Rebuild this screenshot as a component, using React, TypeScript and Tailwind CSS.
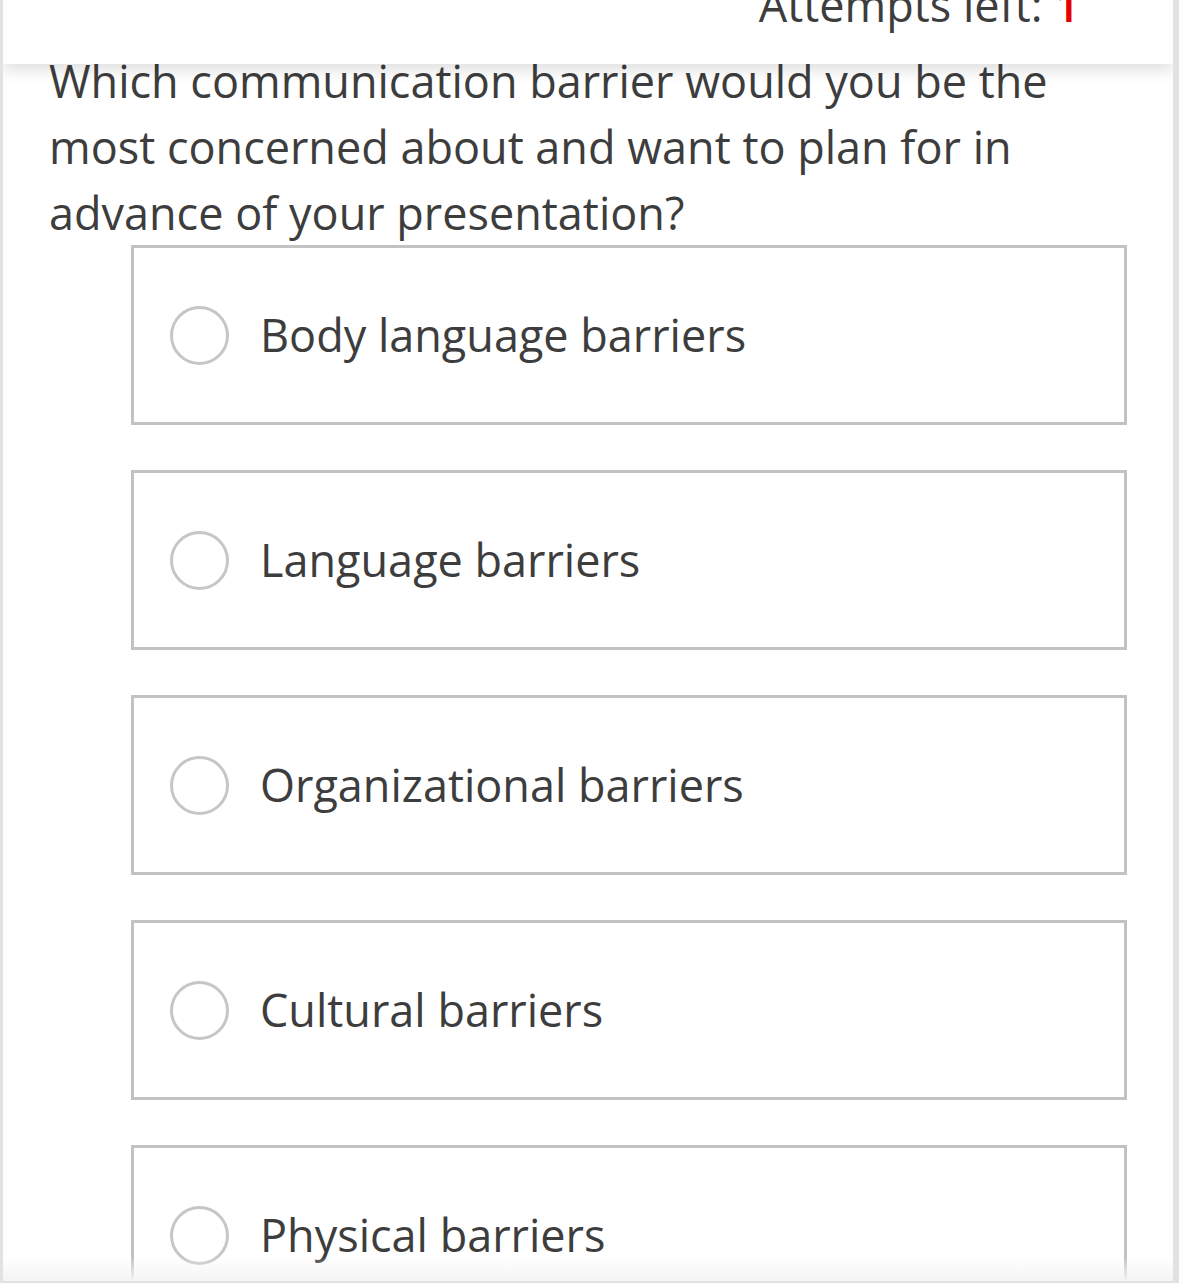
import React from "react";

const options = [
  "Body language barriers",
  "Language barriers",
  "Organizational barriers",
  "Cultural barriers",
  "Physical barriers",
];

function Option({ label }: { label: string }) {
  return (
    <label className="flex h-[180px] cursor-pointer items-center border-[3px] border-[#c2c2c2] bg-white pl-[36px]">
      <span className="h-[59px] w-[59px] shrink-0 rounded-full border-[3px] border-[#c6c6c6] bg-white" />
      <span className="ml-[31px] text-[45px] leading-[66px] text-[#3d3d3d]">{label}</span>
    </label>
  );
}

export default function App() {
  return (
    <div
      className="relative h-[1283px] w-[1179px] overflow-hidden bg-[#e2e2e2] pb-[2px] pl-[3px] pr-[6px]"
      style={{ fontFamily: '"Open Sans", "Noto Sans", sans-serif' }}
    >
      <div className="relative h-full overflow-hidden bg-white">
        {/* top bar, sits over the question */}
        <div className="absolute inset-x-0 top-0 z-10 flex h-[64px] justify-end bg-white pr-[93px] shadow-[0_6px_14px_rgba(0,0,0,0.13)]">
          <div className="-mt-[28px] text-[45px] leading-[66px] text-[#3d3d3d]">
            Attempts left: <span className="font-semibold text-[#e60000]">1</span>
          </div>
        </div>

        <div className="px-[46px] pt-[48px]">
          <p className="text-[45px] leading-[66px] text-[#3d3d3d]">
            Which communication barrier would you be the most concerned about and want to plan for in advance of your
            presentation?
          </p>
          <div className="ml-[82px] -mt-[1px] flex flex-col gap-[45px]">
            {options.map((o) => (
              <Option key={o} label={o} />
            ))}
          </div>
        </div>

        <div className="pointer-events-none absolute inset-x-0 bottom-0 h-[24px] bg-gradient-to-t from-[#f4f4f4] to-transparent" />
      </div>
    </div>
  );
}
